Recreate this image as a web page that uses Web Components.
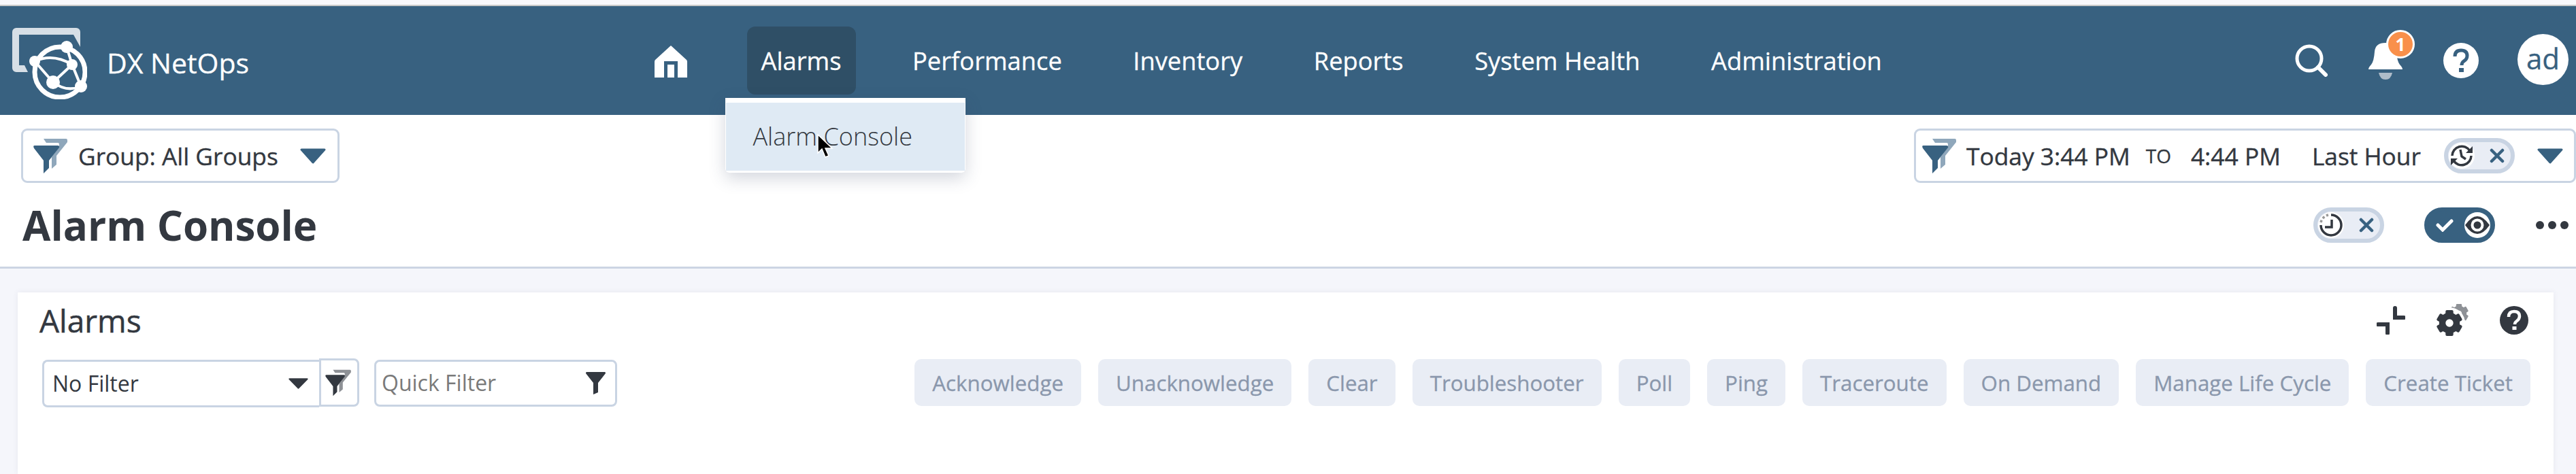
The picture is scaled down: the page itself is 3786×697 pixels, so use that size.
<!DOCTYPE html>
<html>
<head>
<meta charset="utf-8">
<title>Alarm Console</title>
<style>
  html, body { margin: 0; height: 100%; }
  body {
    display: flex;
    flex-direction: column;
    height: 697px;
    overflow: hidden;
    background: #f5f6fb;
    font-family: "Open Sans", "Noto Sans", sans-serif;
    color: #333840;
  }
</style>
</head>
<body>
<nx-header>
  <nx-nav-item icon="home" slot="nav"></nx-nav-item>
  <nx-nav-item active slot="nav">Alarms
    <nx-menu slot="menu">Alarm Console</nx-menu>
  </nx-nav-item>
  <nx-nav-item slot="nav">Performance</nx-nav-item>
  <nx-nav-item slot="nav">Inventory</nx-nav-item>
  <nx-nav-item slot="nav">Reports</nx-nav-item>
  <nx-nav-item slot="nav">System Health</nx-nav-item>
  <nx-nav-item slot="nav">Administration</nx-nav-item>
</nx-header>
<nx-filter-bar></nx-filter-bar>
<nx-title-bar>Alarm Console</nx-title-bar>
<nx-alarm-card title="Alarms">
  <nx-action>Acknowledge</nx-action>
  <nx-action>Unacknowledge</nx-action>
  <nx-action>Clear</nx-action>
  <nx-action>Troubleshooter</nx-action>
  <nx-action>Poll</nx-action>
  <nx-action>Ping</nx-action>
  <nx-action>Traceroute</nx-action>
  <nx-action>On Demand</nx-action>
  <nx-action>Manage Life Cycle</nx-action>
  <nx-action>Create Ticket</nx-action>
</nx-alarm-card>

<script>
const BLUE = "#386180";
const INK = "#333840";

// funnel with the pale second funnel behind it
function funnel(main, pale) {
  return `<svg width="50" height="53" viewBox="0 0 50 53" style="display:block;flex:none">
    <path fill="${pale}" d="M15 1H48q2 0 2 2V6L34 26V39L27 45V28L38 13V9q0-2-2-2H19Z"/>
    <path fill="${main}" d="M2 11H36q3 0 2 3L23 33V44L15 52V33L1 15q-2-4 1-4Z"/>
  </svg>`;
}

function triangle(color, w = 38, h = 23) {
  return `<svg width="${w}" height="${h}" viewBox="0 0 38 23" preserveAspectRatio="none" style="display:block;flex:none">
    <path fill="${color}" stroke="${color}" stroke-width="3" stroke-linejoin="round" d="M2 2H36L19 21Z"/>
  </svg>`;
}

function gear(cx, cy, r, color) {
  let teeth = "";
  for (let i = 0; i < 6; i++) {
    teeth += `<rect x="${cx - r * 0.3}" y="${cy - r}" width="${r * 0.6}" height="${r * 0.5}" rx="${r * 0.1}" transform="rotate(${i * 60} ${cx} ${cy})"/>`;
  }
  return `<g fill="${color}">${teeth}<circle cx="${cx}" cy="${cy}" r="${r * 0.55}" fill="none" stroke="${color}" stroke-width="${r * 0.5}"/></g>`;
}

class NxHeader extends HTMLElement {
  constructor() {
    super();
    this.attachShadow({ mode: "open" });
    this.shadowRoot.innerHTML = `
      <style>
        :host { display: block; flex: none; background: #f8f8fb; padding-top: 7px; }
        .bar {
          display: flex;
          align-items: center;
          height: 160px;
          border-top: 2px solid #c9c9c9;
          background: ${BLUE};
          color: #fff;
          padding: 0 11px 0 18px;
        }
        .brand {
          flex: 0 0 919px;
          display: flex;
          align-items: center;
          gap: 29px;
          font-size: 41px;
          -webkit-text-stroke: 0.3px currentColor;
        }
        .brand svg { display: block; margin-top: 9px; }
        .brand span { margin-top: 6px; }
        nav { display: flex; align-items: center; gap: 62.5px; position: relative; }
        .actions { margin-left: auto; display: flex; align-items: center; gap: 60px; }
        .bell { position: relative; width: 50px; height: 55px; }
        .badge {
          position: absolute;
          left: 26px;
          top: -18px;
          width: 36px;
          height: 36px;
          border: 3px solid #fff;
          border-radius: 50%;
          background: #f9904b;
          color: #fff;
          font: 700 26px/36px "Open Sans", sans-serif;
          text-align: center;
        }
        .avatar {
          width: 75px;
          height: 75px;
          border-radius: 50%;
          background: #fff;
          color: ${BLUE};
          font-size: 42px;
          line-height: 72px;
          text-align: center;
          margin-left: -3px;
          margin-top: -3px;
          -webkit-text-stroke: 0.3px currentColor;
        }
      </style>
      <div class="bar">
        <div class="brand">
          <svg width="110" height="105" viewBox="18 41 110 105">
            <path fill="#d7dfe6" d="M24 41H112a6 6 0 0 1 6 6V69L108 51H28V96H36L41 106H24a6 6 0 0 1-6-6V47a6 6 0 0 1 6-6Z"/>
            <circle cx="88" cy="106" r="37" fill="${BLUE}" stroke="#fff" stroke-width="7"/>
            <g fill="none" stroke="#fff" stroke-width="4">
              <path d="M51 90Q78 78 106 95"/>
              <path d="M51 90L78 121"/>
              <path d="M98 69L106 95L119 127"/>
              <path d="M106 95L78 121"/>
              <path d="M78 121Q98 136 119 127"/>
            </g>
            <g fill="#fff">
              <circle cx="98" cy="69" r="9"/>
              <circle cx="51" cy="90" r="8"/>
              <circle cx="106" cy="95" r="8"/>
              <circle cx="78" cy="121" r="10"/>
              <circle cx="119" cy="127" r="9"/>
            </g>
          </svg>
          <span>DX NetOps</span>
        </div>
        <nav><slot name="nav"></slot></nav>
        <div class="actions">
          <svg width="48" height="48" viewBox="0 0 48 48">
            <circle cx="21" cy="21" r="18" fill="none" stroke="#fff" stroke-width="5"/>
            <path d="M34 34L45 45" stroke="#fff" stroke-width="6" stroke-linecap="round"/>
          </svg>
          <div class="bell">
            <svg width="50" height="55" viewBox="0 0 50 55" style="display:block">
              <path fill="#fff" d="M0 40Q0 37 4 33Q8 28 9 14Q10 1 25 1Q40 1 41 14Q42 28 46 33Q50 37 50 40Z"/>
              <path fill="#aebcc9" d="M15 45H35Q33 55 25 55Q17 55 15 45Z"/>
            </svg>
            <div class="badge">1</div>
          </div>
          <svg width="52" height="52" viewBox="0 0 52 52">
            <circle cx="26" cy="26" r="26" fill="#fff"/>
            <path d="M17 20Q17 11 26 11Q35 11 35 19Q35 24 30 27Q27 29 27 33" fill="none" stroke="${BLUE}" stroke-width="5"/>
            <rect x="23" y="37" width="7" height="6" fill="${BLUE}"/>
          </svg>
          <div class="avatar">ad</div>
        </div>
      </div>
    `;
  }
}

class NxNavItem extends HTMLElement {
  constructor() {
    super();
    this.attachShadow({ mode: "open" });
    const home = this.getAttribute("icon") === "home";
    this.shadowRoot.innerHTML = `
      <style>
        :host { display: block; position: relative; }
        .item {
          display: flex;
          align-items: center;
          height: 100px;
          padding: 0 21px;
          border-radius: 12px;
          font-size: 36.3px;
          -webkit-text-stroke: 0.3px currentColor;
          white-space: nowrap;
        }
        :host([active]) .item { background: #2f4f66; }
        ::slotted(nx-menu) { position: absolute; left: -32px; top: 105px; -webkit-text-stroke: 0; }
      </style>
      <div class="item">
        ${home ? `<svg width="48" height="48" viewBox="0 0 48 48" style="display:block;margin:4px 4px 0 4px">
          <path fill="#fff" fill-rule="evenodd" d="M24 0L47 21Q48 22 48 24V47H34V23H14V47H0V24Q0 22 1 21Z"/>
          <path fill="#fff" d="M19 28H29V47H19Z"/>
        </svg>` : ""}
        <slot></slot>
      </div>
      <slot name="menu"></slot>
    `;
  }
}

class NxMenu extends HTMLElement {
  constructor() {
    super();
    this.attachShadow({ mode: "open" });
    this.shadowRoot.innerHTML = `
      <style>
        :host {
          display: block;
          width: 353px;
          height: 110px;
          box-sizing: border-box;
          padding: 7px 1px 3px;
          background: #fff;
          border-radius: 0 0 6px 6px;
          box-shadow: 0 8px 24px rgba(56, 70, 100, 0.22);
          color: ${INK};
        }
        .row {
          position: relative;
          height: 100px;
          background: #dfeaf4;
          padding-left: 40px;
          font-size: 36px;
          font-weight: 300;
          line-height: 100px;
          white-space: nowrap;
        }
        svg { position: absolute; left: 134px; top: 46px; }
      </style>
      <div class="row">
        <slot></slot>
        <svg width="24" height="36" viewBox="0 0 24 36">
          <path fill="#000" stroke="#fff" stroke-width="1.5" d="M1 1V28L7 22L12 34L17 32L12 21H22Z"/>
        </svg>
      </div>
    `;
  }
}

class NxToggle extends HTMLElement {
  constructor() {
    super();
    this.attachShadow({ mode: "open" });
    const on = this.hasAttribute("on");
    const kind = this.getAttribute("kind");
    const glyphs = {
      history: `<path d="M5 19A14 14 0 0 1 31 12M33 19A14 14 0 0 1 7 26" fill="none" stroke="${INK}" stroke-width="3.5"/>
        <path d="M25 15H35V5ZM13 23H3V33Z" fill="${INK}"/>
        <path d="M17 10L19 20L25 24" fill="none" stroke="${INK}" stroke-width="3.5"/>`,
      clock: `<path d="M19 4A15 15 0 1 1 4 19" fill="none" stroke="${INK}" stroke-width="3.5"/>
        <path d="M4 15A15 15 0 0 1 15 4" fill="none" stroke="#999" stroke-width="3.5" stroke-dasharray="3.500 3"/>
        <path d="M20 11V22H10" fill="none" stroke="${INK}" stroke-width="3.5"/>`,
      eye: `<path d="M1 19Q10 6 19 6T37 19Q28 32 19 32T1 19Z" fill="${INK}"/>
        <circle cx="19" cy="19" r="9.500" fill="#fff"/><circle cx="19" cy="19" r="5.500" fill="${INK}"/>`
    };
    this.shadowRoot.innerHTML = `
      <style>
        :host { display: block; flex: none; }
        .pill {
          display: flex;
          align-items: center;
          width: 104px;
          height: 52px;
          box-sizing: border-box;
          border-radius: 26px;
          border: 6px solid ${on ? BLUE : "#c9d4e3"};
          padding: 0 1px;
          background: ${on ? BLUE : "#e9edf5"};
          flex-direction: ${on ? "row-reverse" : "row"};
        }
        .knob { width: 38px; height: 38px; border-radius: 50%; background: #fff; flex: none; }
        .knob svg { display: block; }
        .mark { flex: 1; display: flex; justify-content: center; padding: ${on ? "0 6px 0 0" : "0 0 0 14px"}; }
      </style>
      <div class="pill">
        <div class="knob"><svg width="38" height="38" viewBox="0 0 38 38">${glyphs[kind]}</svg></div>
        <div class="mark">
          ${on
            ? `<svg width="26" height="20" viewBox="0 0 26 20"><path d="M3 10L10 17L23 4" fill="none" stroke="#fff" stroke-width="5" stroke-linecap="round"/></svg>`
            : `<svg width="22" height="22" viewBox="0 0 22 22"><path d="M3 3L19 19M19 3L3 19" stroke="${BLUE}" stroke-width="4.500" stroke-linecap="round"/></svg>`}
        </div>
      </div>
    `;
  }
}

class NxFilterBar extends HTMLElement {
  constructor() {
    super();
    this.attachShadow({ mode: "open" });
    this.shadowRoot.innerHTML = `
      <style>
        :host {
          display: flex;
          flex: none;
          justify-content: space-between;
          align-items: flex-start;
          background: #fff;
          padding: 20px 0 12px 31px;
          font-size: 35.3px;
          color: ${INK};
          -webkit-text-stroke: 0.4px currentColor;
        }
        .box {
          display: flex;
          align-items: center;
          box-sizing: border-box;
          height: 80px;
          border: 3px solid #c9d4e3;
          border-radius: 9px;
          white-space: nowrap;
        }
        .group { width: 468px; padding-left: 15px; }
        .group span { margin-left: 16px; width: 326px; }
        .time { width: 973px; padding-left: 9px; }
        .time span { display: block; }
        .to { font-size: 28px; -webkit-text-stroke: 0.3px currentColor; }
      </style>
      <div class="box group">
        ${funnel(BLUE, "#8fa7bb")}
        <span>Group: All Groups</span>
        ${triangle(BLUE)}
      </div>
      <div class="box time">
        ${funnel(BLUE, "#8fa7bb")}
        <span style="margin-left:15px">Today 3:44 PM</span>
        <span class="to" style="margin-left:23px">TO</span>
        <span style="margin-left:29px">4:44 PM</span>
        <span style="margin-left:46px">Last Hour</span>
        <nx-toggle kind="history" style="margin-left:34px"></nx-toggle>
        <span style="margin-left:33px">${triangle(BLUE)}</span>
      </div>
    `;
  }
}

class NxTitleBar extends HTMLElement {
  constructor() {
    super();
    this.attachShadow({ mode: "open" });
    this.shadowRoot.innerHTML = `
      <style>
        :host {
          display: flex;
          flex: none;
          align-items: center;
          height: 100px;
          box-sizing: content-box;
          background: #fff;
          border-bottom: 3px solid #ccd5e3;
          padding: 0 11px 11px 33px;
        }
        h1 { margin: 0; font-size: 60px; font-weight: 700; color: ${INK}; }
        .right { margin-left: auto; display: flex; align-items: center; }
      </style>
      <h1><slot></slot></h1>
      <div class="right">
        <nx-toggle kind="clock"></nx-toggle>
        <nx-toggle kind="eye" on style="margin-left:59px"></nx-toggle>
        <svg width="48" height="12" viewBox="0 0 48 12" style="margin-left:60px">
          <circle cx="6" cy="6" r="6" fill="${INK}"/><circle cx="24" cy="6" r="6" fill="${INK}"/><circle cx="42" cy="6" r="6" fill="${INK}"/>
        </svg>
      </div>
    `;
  }
}

class NxAction extends HTMLElement {
  constructor() {
    super();
    this.attachShadow({ mode: "open" });
    this.shadowRoot.innerHTML = `
      <style>
        :host {
          display: flex;
          align-items: center;
          box-sizing: border-box;
          height: 69px;
          padding: 0 26px;
          background: #e9edf5;
          border-radius: 10px;
          color: #8a97ac;
          font-size: 31.3px;
          -webkit-text-stroke: 0.3px currentColor;
          white-space: nowrap;
        }
      </style>
      <slot></slot>
    `;
  }
}

class NxAlarmCard extends HTMLElement {
  constructor() {
    super();
    this.attachShadow({ mode: "open" });
    this.shadowRoot.innerHTML = `
      <style>
        :host {
          display: block;
          flex: 1;
          margin: 35px 33px 0 26px;
          padding: 1px 34px 0 36px;
          background: #fff;
          box-shadow: 0 0 8px rgba(60, 70, 100, 0.08);
          color: ${INK};
        }
        .head { display: flex; align-items: center; height: 80px; margin-bottom: 17px; }
        h2 { margin: 0 0 0 -4px; font-size: 46px; font-weight: 400; -webkit-text-stroke: 0.5px currentColor; }
        .tools { margin-left: auto; display: flex; align-items: center; padding-right: 3px; }
        .row { display: flex; align-items: flex-start; }
        .select, .quick {
          display: flex;
          align-items: center;
          box-sizing: border-box;
          border: 3px solid #c9d4e3;
          font-size: 32px;
        }
        .select {
          width: 407px;
          height: 70px;
          margin-top: 1px;
          padding: 0 16px 0 12px;
          justify-content: space-between;
          border-right: 0;
          border-radius: 8px 0 0 8px;
        }
        .select span, .quick span { margin-top: -2px; }
        .fbtn {
          display: flex;
          align-items: center;
          box-sizing: border-box;
          width: 59px;
          height: 71px;
          margin-top: -1px;
          padding-left: 6px;
          border: 3px solid #c9d4e3;
          border-radius: 0 8px 8px 0;
        }
        .quick {
          width: 357px;
          height: 69px;
          margin: 1px 0 0 22px;
          padding: 0 14px 0 8px;
          justify-content: space-between;
          border-radius: 8px;
          color: #7a7a7a;
        }
        .actions { margin-left: auto; display: flex; gap: 25px; }
      </style>
      <div class="head">
        <h2>${this.getAttribute("title")}</h2>
        <div class="tools">
          <svg width="42" height="42" viewBox="0 0 42 42">
            <path d="M27 3V17H40M2 27H16V40" fill="none" stroke="${INK}" stroke-width="6" stroke-linecap="round"/>
          </svg>
          <svg width="48" height="48" viewBox="0 0 48 48" style="margin-left:46px">
            ${gear(33, 14, 14, "#8e9196")}
            <circle cx="19" cy="28" r="23" fill="#fff"/>
            ${gear(19, 28, 19, INK)}
          </svg>
          <svg width="42" height="42" viewBox="0 0 42 42" style="margin-left:45px">
            <circle cx="21" cy="21" r="21" fill="${INK}"/>
            <path d="M13 16Q13 8 21 8Q29 8 29 15Q29 19 25 22Q22 24 22 27" fill="none" stroke="#fff" stroke-width="4.5"/>
            <rect x="18.500" y="30" width="6" height="5" fill="#fff"/>
          </svg>
        </div>
      </div>
      <div class="row">
        <div class="select"><span>No Filter</span>${triangle(INK, 29, 16)}</div>
        <div class="fbtn"><svg width="38" height="40" viewBox="0 0 50 53">
          <path fill="#8e9196" d="M15 1H48q2 0 2 2V6L34 26V39L27 45V28L38 13V9q0-2-2-2H19Z"/>
          <path fill="${INK}" d="M2 11H36q3 0 2 3L23 33V44L15 52V33L1 15q-2-4 1-4Z"/>
        </svg></div>
        <div class="quick"><span>Quick Filter</span>
          <svg width="29" height="33" viewBox="0 0 29 33"><path fill="${INK}" d="M1 0H28Q29 0 29 2L18 16V30L11 33V16L0 2Q0 0 1 0Z"/></svg>
        </div>
        <div class="actions"><slot></slot></div>
      </div>
    `;
  }
}

customElements.define("nx-header", NxHeader);
customElements.define("nx-nav-item", NxNavItem);
customElements.define("nx-menu", NxMenu);
customElements.define("nx-toggle", NxToggle);
customElements.define("nx-filter-bar", NxFilterBar);
customElements.define("nx-title-bar", NxTitleBar);
customElements.define("nx-action", NxAction);
customElements.define("nx-alarm-card", NxAlarmCard);
</script>
</body>
</html>
